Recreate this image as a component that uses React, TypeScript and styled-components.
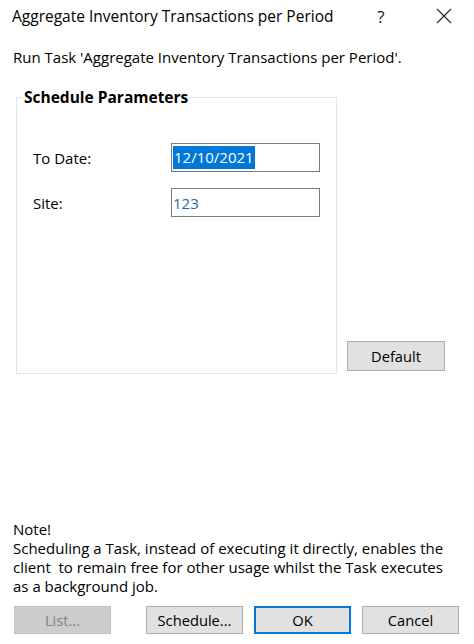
import * as React from 'react'
import styled, { createGlobalStyle, css } from 'styled-components'

const GlobalStyle = createGlobalStyle`
  html, body {
    margin: 0;
    padding: 0;
    background: #ffffff;
  }
  * {
    box-sizing: border-box;
  }
`

const FONT = `'Open Sans', 'Noto Sans', sans-serif`

const Window = styled.div`
  width: 474px;
  height: 644px;
  display: flex;
  flex-direction: column;
  background: #ffffff;
  font-family: ${FONT};
  color: #000000;
  overflow: hidden;
`

const TitleBar = styled.div`
  height: 32px;
  display: flex;
  align-items: center;
  padding-left: 12px;
`

const Title = styled.div`
  flex: 1;
  font-size: 15.5px;
  white-space: nowrap;
`

const CaptionButton = styled.div<{ $w: number }>`
  width: ${(p) => p.$w}px;
  height: 32px;
  display: flex;
  align-items: center;
  justify-content: center;
  font-size: 17px;
  color: #222;
`

const Body = styled.div`
  flex: 1;
  display: flex;
  flex-direction: column;
  padding: 15px 15px 10px 13px;
`

const Intro = styled.div`
  font-size: 15px;
  line-height: 20px;
`

const Middle = styled.div`
  display: flex;
  align-items: flex-end;
  gap: 10px;
  margin-top: 20px;
  padding-left: 3px;
`

const GroupBox = styled.fieldset`
  width: 321px;
  height: 287px;
  margin: 0;
  padding: 0 0 0 6px;
  border: 1px solid #e6e6e6;
`

const Legend = styled.legend`
  font-size: 15.5px;
  font-weight: 700;
  padding: 0 1px;
  line-height: 20px;
`

const Fields = styled.div`
  display: flex;
  flex-direction: column;
  gap: 16px;
  padding: 36px 0 0 10px;
`

const FieldRow = styled.div`
  display: flex;
  align-items: center;
`

const FieldLabel = styled.label`
  width: 138px;
  font-size: 15px;
`

const TextBox = styled.div`
  width: 149px;
  height: 29px;
  border: 1px solid #7a7a7a;
  padding: 2px 1px;
  display: flex;
  align-items: center;
  font-size: 15px;
  color: #1c6aa6;
`

const Selected = styled.span`
  background: #0078d7;
  color: #ffffff;
  line-height: 23px;
  padding: 0 1px;
`

const Spacer = styled.div`
  flex: 1;
`

const Note = styled.div`
  font-size: 15px;
  line-height: 19px;
`

const ButtonRow = styled.div`
  display: flex;
  align-items: center;
  margin-top: 10px;
  padding-left: 1px;
`

const ButtonGroup = styled.div`
  margin-left: auto;
  display: flex;
  gap: 11px;
`

const Button = styled.button<{ $primary?: boolean }>`
  width: 97px;
  height: 28px;
  padding: 0;
  font-family: ${FONT};
  font-size: 14.7px;
  color: #000;
  background: #e1e1e1;
  border: 1px solid #adadad;
  ${(p) =>
    p.$primary &&
    css`
      border: 2px solid #0078d7;
    `}
  &:disabled {
    background: #cccccc;
    border-color: #bfbfbf;
    color: #838383;
  }
`

const DefaultButton = styled(Button)`
  height: 30px;
  width: 98px;
  margin-bottom: 3px;
`

const CloseIcon = () => (
  <svg width="16" height="16" viewBox="0 0 16 16">
    <path d="M1 1 L15 15 M15 1 L1 15" stroke="#222" strokeWidth="1.1" fill="none" />
  </svg>
)

export default function App() {
  return (
    <Window>
      <GlobalStyle />
      <TitleBar>
        <Title>Aggregate Inventory Transactions per Period</Title>
        <CaptionButton $w={66}>?</CaptionButton>
        <CaptionButton $w={60}>
          <CloseIcon />
        </CaptionButton>
      </TitleBar>
      <Body>
        <Intro>Run Task 'Aggregate Inventory Transactions per Period'.</Intro>
        <Middle>
          <GroupBox>
            <Legend>Schedule Parameters</Legend>
            <Fields>
              <FieldRow>
                <FieldLabel>To Date:</FieldLabel>
                <TextBox>
                  <Selected>12/10/2021</Selected>
                </TextBox>
              </FieldRow>
              <FieldRow>
                <FieldLabel>Site:</FieldLabel>
                <TextBox>123</TextBox>
              </FieldRow>
            </Fields>
          </GroupBox>
          <DefaultButton>Default</DefaultButton>
        </Middle>
        <Spacer />
        <Note>
          Note!
          <br />
          Scheduling a Task, instead of executing it directly, enables the
          <br />
          client&nbsp; to remain free for other usage whilst the Task executes
          <br />
          as a background job.
        </Note>
        <ButtonRow>
          <Button disabled>List...</Button>
          <ButtonGroup>
            <Button>Schedule...</Button>
            <Button $primary>OK</Button>
            <Button>Cancel</Button>
          </ButtonGroup>
        </ButtonRow>
      </Body>
    </Window>
  )
}
